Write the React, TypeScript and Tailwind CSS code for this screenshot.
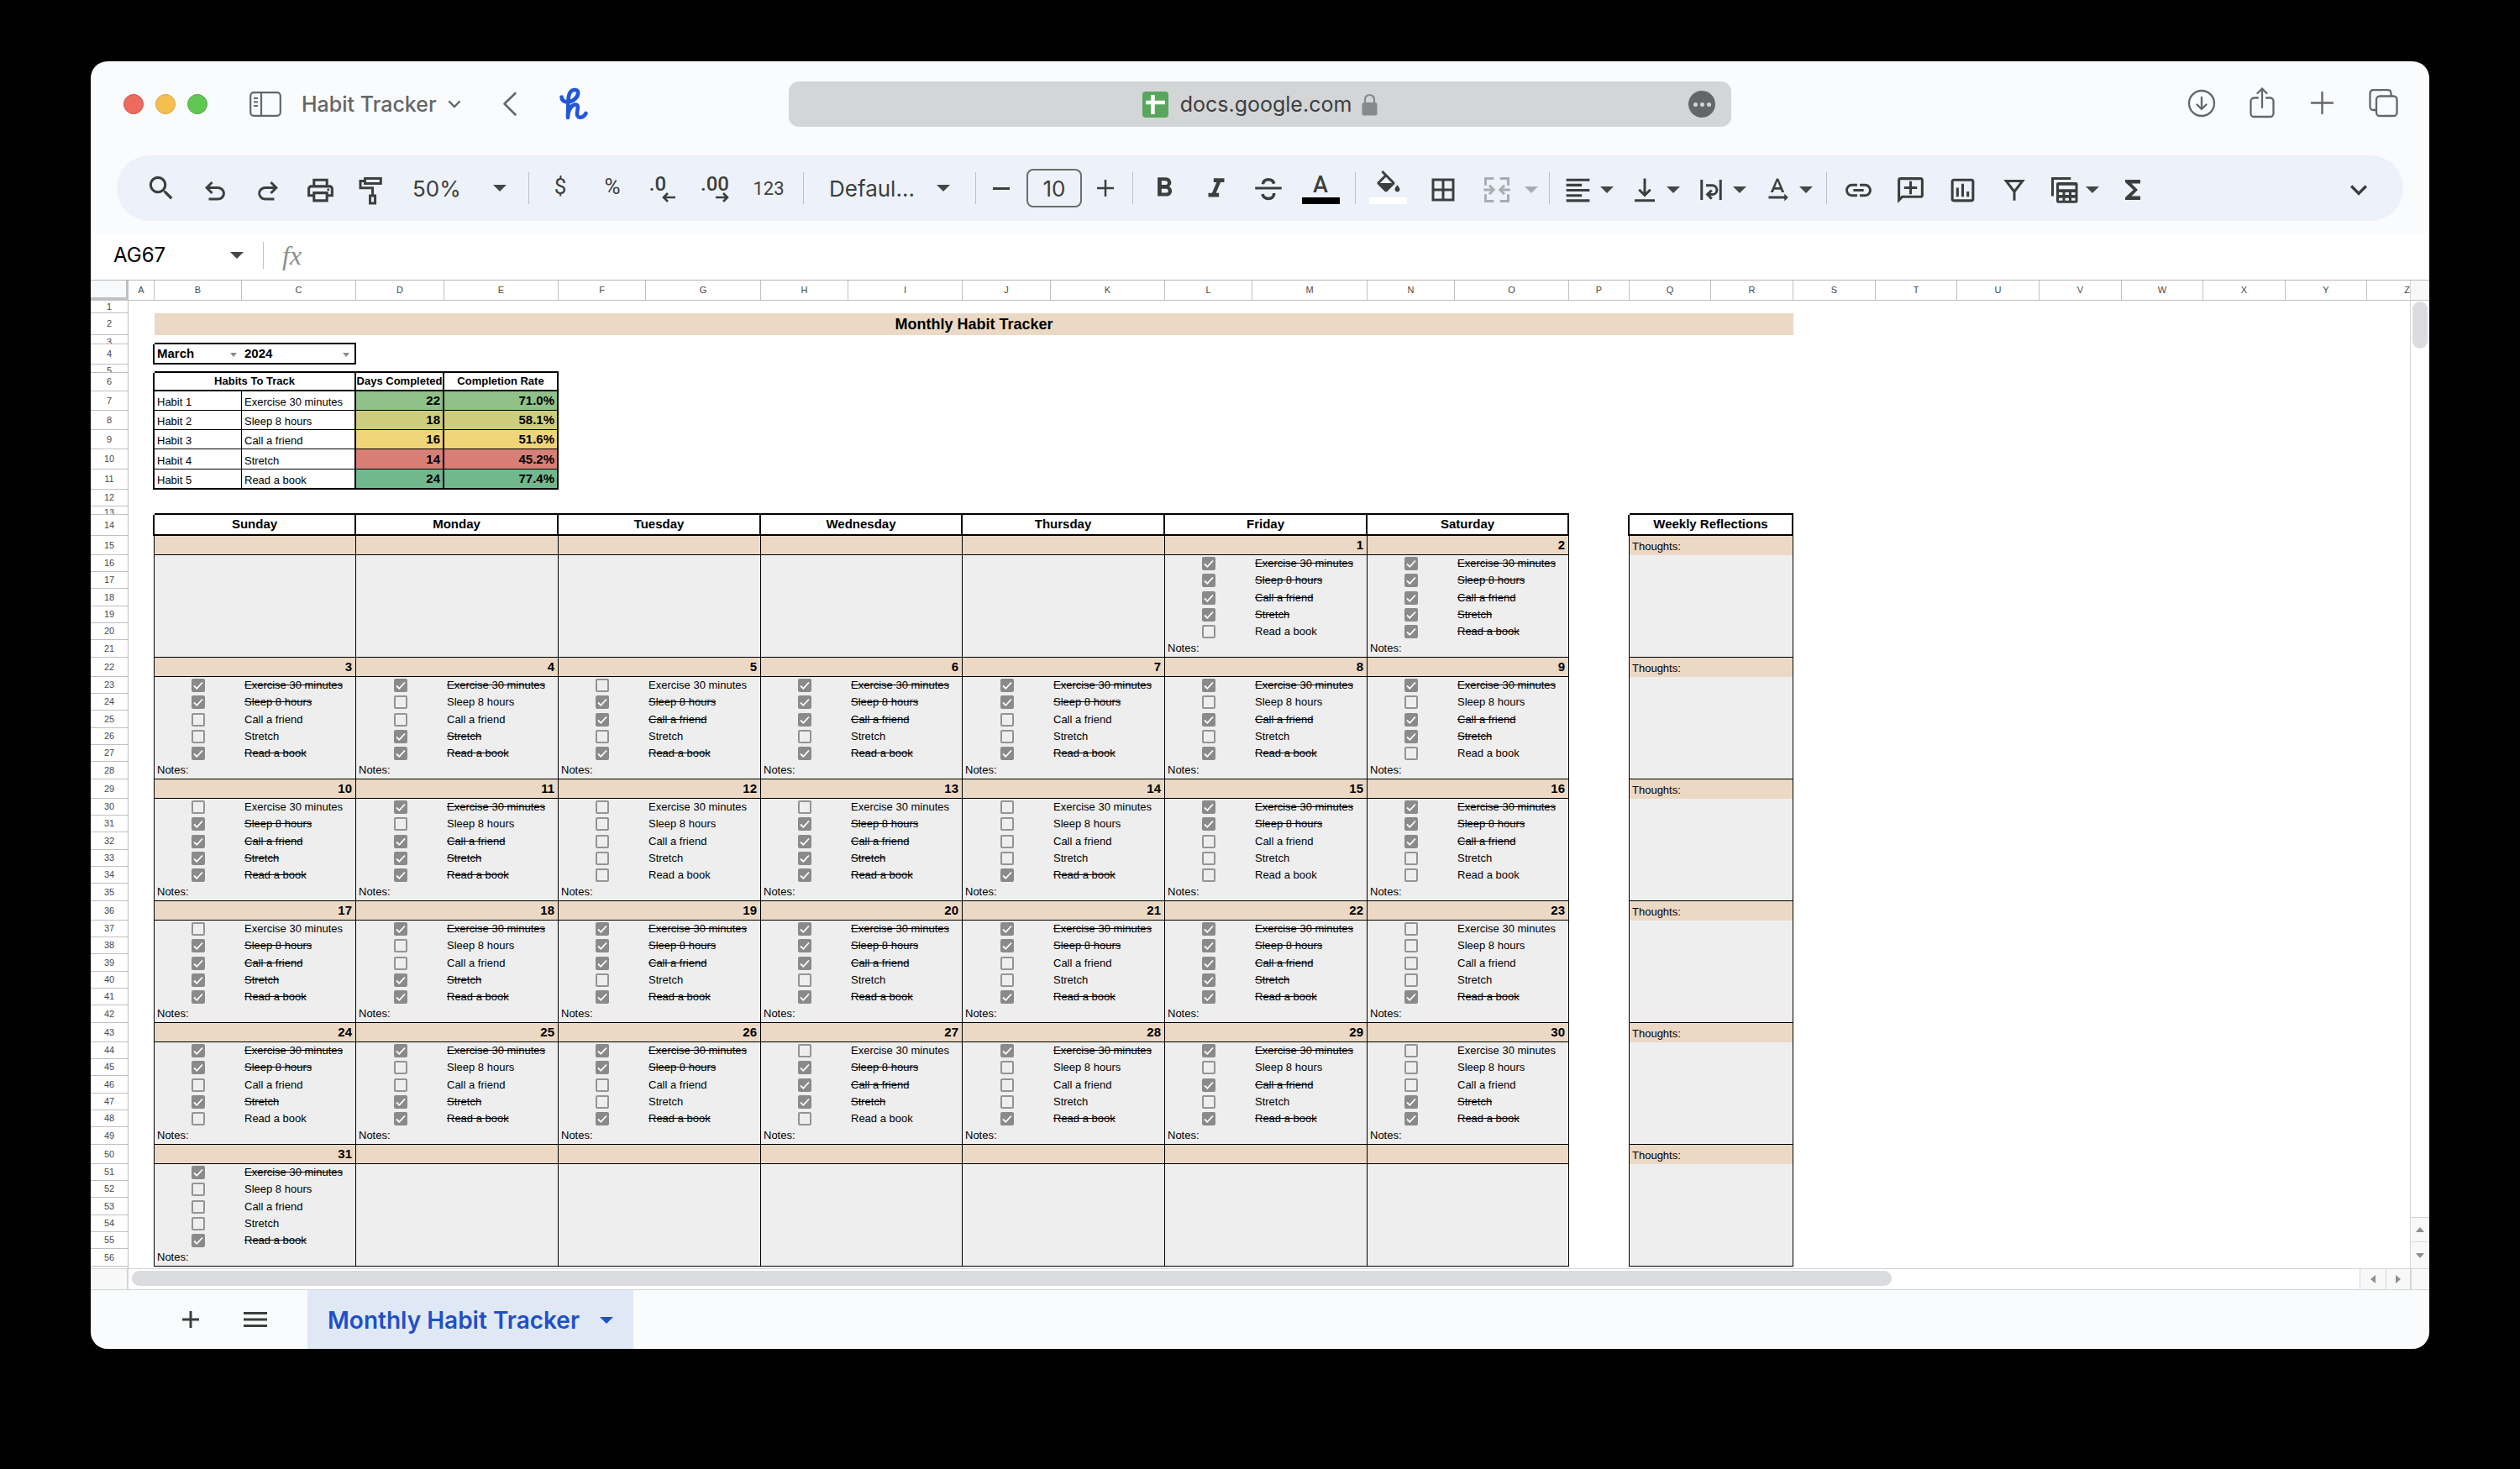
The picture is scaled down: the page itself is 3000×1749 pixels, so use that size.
import { useState, type ReactNode } from "react";
import {
  MdBorderAll,
  MdExpandMore,
  MdFormatAlignLeft,
  MdFormatBold,
  MdFormatItalic,
  MdFunctions,
  MdLink,
  MdOutlineAddComment,
  MdOutlineInsertChart,
  MdOutlinePrint,
  MdSearch,
  MdTextRotationNone,
} from "react-icons/md";

/* ---------- data ---------- */

const HABITS = ["Exercise 30 minutes", "Sleep 8 hours", "Call a friend", "Stretch", "Read a book"];

const SUMMARY = [
  { days: "22", rate: "71.0%", color: "bg-[#90c189]", height: "h-[23px]" },
  { days: "18", rate: "58.1%", color: "bg-[#cdce7d]", height: "h-[23px]" },
  { days: "16", rate: "51.6%", color: "bg-[#efd577]", height: "h-[23px]" },
  { days: "14", rate: "45.2%", color: "bg-[#d77f76]", height: "h-[24px]" },
  { days: "24", rate: "77.4%", color: "bg-[#71b88e]", height: "h-[24px]" },
];

const WEEKDAYS = ["Sunday", "Monday", "Tuesday", "Wednesday", "Thursday", "Friday", "Saturday"];

// One string per day of the month; each digit is one habit, in the order of HABITS.
const INITIAL_LOG = [
  "11110", "11111", "11001", "10011", "01101", "11101", "11001", "10101",
  "10110", "01111", "10111", "00000", "01111", "00001", "11000", "11100",
  "01111", "10011", "11101", "11101", "11001", "11111", "00001", "11010",
  "10011", "11001", "01110", "10001", "10101", "00011", "10001",
];

const FIRST_WEEKDAY = 5;
const WEEKS = [0, 1, 2, 3, 4, 5].map((w) =>
  WEEKDAYS.map((_, d) => {
    const day = w * 7 + d - FIRST_WEEKDAY + 1;
    return day >= 1 && day <= INITIAL_LOG.length ? day : null;
  }),
);

const LETTERS = "ABCDEFGHIJKLMNOPQRSTUVWXYZ".split("");
const COLUMNS = [
  "w-[45px]", "w-[31px]", "w-[104px]", "w-[136px]", "w-[105px]", "w-[136px]", "w-[104px]",
  "w-[137px]", "w-[104px]", "w-[136px]", "w-[105px]", "w-[136px]", "w-[104px]", "w-[137px]",
  "w-[104px]", "w-[136px]", "w-[72px]", "w-[97px]", "w-[98px]", "w-[98px]", "w-[97px]",
  "w-[98px]", "w-[98px]", "w-[97px]", "w-[98px]", "w-[97px]", "",
];

/* ---------- small drawings ---------- */

function Caret({ className = "text-[#444746]" }: { className?: string }) {
  return (
    <svg width="16" height="8" viewBox="0 0 16 8" className={`shrink-0 ${className}`} aria-hidden="true">
      <path d="M0 0h16L8 8z" fill="currentColor" />
    </svg>
  );
}

function Stroke({ children, size = 36 }: { children: ReactNode; size?: number }) {
  return (
    <svg
      width={size}
      height={size}
      viewBox="0 0 24 24"
      fill="none"
      stroke="currentColor"
      strokeWidth="2"
      className="shrink-0"
      aria-hidden="true"
    >
      {children}
    </svg>
  );
}

function Symbol({ d }: { d: string }) {
  return (
    <svg width="36" height="36" viewBox="0 -960 960 960" fill="currentColor" className="shrink-0" aria-hidden="true">
      <path d={d} />
    </svg>
  );
}

/* ---------- browser bar ---------- */

function BrowserBar() {
  return (
    <header className="grid h-[102px] grid-cols-[1fr_minmax(0,1122px)_1fr] items-center text-[#656669]">
      <div className="flex items-center pl-[39px]">
        <div className="flex gap-[14px]">
          <button aria-label="Close" className="size-6 rounded-full border border-[#d35148] bg-[#ed6a5f]" />
          <button aria-label="Minimize" className="size-6 rounded-full border border-[#d6a243] bg-[#f5bf4f]" />
          <button aria-label="Zoom" className="size-6 rounded-full border border-[#53a73e] bg-[#62c655]" />
        </div>
        <button aria-label="Sidebar" className="ml-[50px]">
          <svg width="38" height="30" viewBox="0 0 38 30" fill="none" stroke="currentColor" strokeWidth="2.2" aria-hidden="true">
            <rect x="1.2" y="1.2" width="35.6" height="27.6" rx="4" />
            <path d="M14 1v28M5 8h5M5 12.5h5M5 17h5" />
          </svg>
        </button>
        <button className="ml-6 flex items-center gap-[13px] text-[25px] leading-8 font-medium whitespace-nowrap">
          Habit Tracker
          <svg width="16" height="10" viewBox="0 0 16 10" fill="none" stroke="currentColor" strokeWidth="2.4" strokeLinecap="round" aria-hidden="true">
            <path d="m2 2 6 6 6-6" />
          </svg>
        </button>
        <button aria-label="Back" className="ml-[49px]">
          <svg width="18" height="30" viewBox="0 0 18 30" fill="none" stroke="currentColor" strokeWidth="2.6" strokeLinecap="round" strokeLinejoin="round" aria-hidden="true">
            <path d="M15.5 2 2.5 14.5 15.5 27.5" />
          </svg>
        </button>
        <button aria-label="Honey" className="ml-[49px]">
          <svg width="36" height="40" viewBox="0 0 36 40" fill="none" stroke="#2257d8" strokeWidth="4.6" strokeLinecap="round" strokeLinejoin="round" aria-hidden="true">
            <path d="M3.5 11.5C4 18 12 19 18 15c6-4 7-11.5 2-12-5.5-.5-8 4-8.500 12L11 36" />
            <path d="M11 33c1-7 5-12.5 9-12.5 4.5 0 2.5 6 2 9.5-.8 7 6 8 10.5 1" />
          </svg>
        </button>
      </div>

      <div className="relative flex h-[54px] items-center justify-center rounded-xl bg-[#d4d5d7] text-[#3d3e40]">
        <a href="#" className="flex items-center text-[25px] leading-8">
          <svg width="31" height="31" viewBox="0 0 31 31" className="mr-[14px]" aria-hidden="true">
            <rect width="31" height="31" rx="4" fill="#58a65c" />
            <path d="M12.5 4v23M4 13h23" stroke="#fff" strokeWidth="4.5" />
          </svg>
          docs.google.com
          <svg width="19" height="27" viewBox="0 0 19 27" className="ml-3" aria-hidden="true">
            <rect x="0.5" y="11" width="18" height="15.5" rx="2.5" fill="#88898b" />
            <path d="M4 12V7.5a5.5 5.5 0 0 1 11 0V12" fill="none" stroke="#88898b" strokeWidth="2.2" />
          </svg>
        </a>
        <button aria-label="Page menu" className="absolute right-[19px] flex size-8 items-center justify-center gap-[3px] rounded-full bg-[#656669]">
          <span className="size-[5px] rounded-full bg-[#d4d5d7]" />
          <span className="size-[5px] rounded-full bg-[#d4d5d7]" />
          <span className="size-[5px] rounded-full bg-[#d4d5d7]" />
        </button>
      </div>

      <div className="flex items-center justify-end gap-9 pr-[37px]">
        <button aria-label="Downloads">
          <svg width="36" height="36" viewBox="0 0 36 36" fill="none" stroke="currentColor" strokeWidth="2.3" strokeLinecap="round" strokeLinejoin="round" aria-hidden="true">
            <circle cx="18" cy="17" r="15" />
            <path d="M18 10v14M12.5 18.5 18 24l5.500-5.500" />
          </svg>
        </button>
        <button aria-label="Share">
          <svg width="36" height="40" viewBox="0 0 36 40" fill="none" stroke="currentColor" strokeWidth="2.3" strokeLinecap="round" strokeLinejoin="round" aria-hidden="true">
            <path d="M13 12.500H8.500A4 4 0 0 0 4.500 16.500v14.500a4 4 0 0 0 4 4h19a4 4 0 0 0 4-4V16.500a4 4 0 0 0-4-4H23M18 24V1.500M12.500 7 18 1.500 23.500 7" />
          </svg>
        </button>
        <button aria-label="New tab">
          <svg width="36" height="36" viewBox="0 0 36 36" fill="none" stroke="currentColor" strokeWidth="2.4" strokeLinecap="round" aria-hidden="true">
            <path d="M17.500 4v25M5 16.500h25" />
          </svg>
        </button>
        <button aria-label="Tab overview">
          <svg width="36" height="36" viewBox="0 0 36 36" fill="none" stroke="currentColor" strokeWidth="2.3" aria-hidden="true">
            <path d="M9 25H6.500a4 4 0 0 1-4-4V5a4 4 0 0 1 4-4h17a4 4 0 0 1 4 4v3" />
            <rect x="10" y="8.5" width="24.5" height="23.5" rx="4" />
          </svg>
        </button>
      </div>
    </header>
  );
}

/* ---------- toolbar ---------- */

function Tool({ label, className, children }: { label: string; className: string; children: ReactNode }) {
  return (
    <button aria-label={label} className={`flex h-[60px] shrink-0 items-center justify-center ${className}`}>
      {children}
    </button>
  );
}

function Divider() {
  return <span className="h-[38px] w-px shrink-0 bg-[#bdc1c6]" />;
}

function Toolbar() {
  return (
    <div role="toolbar" aria-label="Main" className="mx-[31px] mt-[10px] mb-[15px] flex h-[78px] items-center overflow-hidden rounded-full bg-[#edf2fa] pr-[25px] pl-[21px] text-[#3c3f3e]">
      <Tool label="Search the menus" className="w-16"><MdSearch size={38} /></Tool>
      <Tool label="Undo" className="w-16 pt-2">
        <Symbol d="M280-200v-80h284q63 0 109.500-40T720-420q0-60-46.500-100T564-560H312l104 104-56 56-200-200 200-200 56 56-104 104h252q97 0 163.500 63T800-420q0 94-66.500 157T564-200H280Z" />
      </Tool>
      <Tool label="Redo" className="w-[62px] pt-2">
        <Symbol d="M396-200q-97 0-163.500-63T166-420q0-94 66.500-157T396-640h252L544-744l56-56 200 200-200 200-56-56 104-104H396q-63 0-109.500 40T240-420q0 60 46.500 100T396-280h284v80H396Z" />
      </Tool>
      <Tool label="Print" className="w-[62px] pt-1"><MdOutlinePrint size={37} /></Tool>
      <Tool label="Paint format" className="w-[58px] pt-[6px]">
        <Stroke>
          <rect x="7.7" y="2.3" width="12.5" height="4" />
          <path d="M7.7 4.3H4v5.5h9.7V16" />
          <rect x="11.7" y="16" width="4" height="6" />
        </Stroke>
      </Tool>
      <Tool label="Zoom" className="w-[159px] !justify-between pr-[26px] pl-[21px]">
        <span className="text-[26px]">50%</span>
        <Caret />
      </Tool>
      <Divider />
      <Tool label="Format as currency" className="w-[74px] pb-1 font-[Roboto] text-[26px]">$</Tool>
      <Tool label="Format as percent" className="w-[50px] pb-1 font-[Roboto] text-[26px]">%</Tool>
      <Tool label="Decrease decimal places" className="ml-1 w-[58px] flex-col font-[Roboto] text-[24px] leading-6 font-medium">
        <span className="mr-2">.0</span>
        <svg width="16" height="12" viewBox="0 0 16 12" fill="none" stroke="currentColor" strokeWidth="2.6" className="-mt-[2px] ml-[18px]" aria-hidden="true">
          <path d="M16 6H2M7 1 2 6l5 5" />
        </svg>
      </Tool>
      <Tool label="Increase decimal places" className="w-[70px] flex-col font-[Roboto] text-[24px] leading-6 font-medium">
        <span>.00</span>
        <svg width="16" height="12" viewBox="0 0 16 12" fill="none" stroke="currentColor" strokeWidth="2.6" className="-mt-[2px] ml-[18px]" aria-hidden="true">
          <path d="M0 6h14M9 1l5 5-5 5" />
        </svg>
      </Tool>
      <Tool label="More formats" className="w-[58px] font-[Roboto] text-[22px]">123</Tool>
      <span className="w-3 shrink-0" />
      <Divider />
      <Tool label="Font" className="w-[204px] !justify-between px-[30px]">
        <span className="text-[26px]">Defaul...</span>
        <Caret />
      </Tool>
      <Divider />
      <Tool label="Decrease font size" className="w-[60px]">
        <span className="h-[3px] w-5 bg-current" />
      </Tool>
      <input
        aria-label="Font size"
        defaultValue="10"
        className="h-[46px] w-[66px] shrink-0 rounded-lg border-2 border-[#6b6e6d] bg-transparent text-center text-[26px]"
      />
      <Tool label="Increase font size" className="w-14">
        <Stroke size={30}><path d="M12 4v16M4 12h16" /></Stroke>
      </Tool>
      <span className="w-1 shrink-0" />
      <Divider />
      <Tool label="Bold" className="w-[74px]"><MdFormatBold size={38} /></Tool>
      <Tool label="Italic" className="w-[50px] pt-[2px]"><MdFormatItalic size={38} /></Tool>
      <Tool label="Strikethrough" className="w-[74px]">
        <Stroke>
          <path d="M1.5 12h21" />
          <path d="M7.6 8.8C8 6.2 9.8 5.2 12 5.2s3.9 1.1 4.4 3.3" strokeWidth="2.4" />
          <path d="M16.5 16c0 2.800-1.900 4.300-4.500 4.300S7.700 18.900 7.400 16.700" strokeWidth="2.4" />
        </Stroke>
      </Tool>
      <Tool label="Text color" className="w-[50px] flex-col justify-end! gap-[2px] pb-[11px]">
        <span className="font-[Roboto] text-[27px] leading-[26px] font-medium">A</span>
        <span className="h-2 w-[45px] bg-black" />
      </Tool>
      <span className="w-4 shrink-0" />
      <Divider />
      <Tool label="Fill color" className="w-[77px] flex-col justify-end! gap-px pb-[11px]">
        <svg width="36" height="36" viewBox="0 0 24 24" fill="currentColor" className="-mb-[5px]" aria-hidden="true">
          <path d="M16.560 8.940 7.620 0 6.210 1.410l2.380 2.380-5.150 5.150c-.59.590-.59 1.540 0 2.120l5.500 5.500c.290.290.680.440 1.060.440s.770-.150 1.060-.440l5.500-5.500c.590-.580.590-1.530 0-2.120zM5.210 10 10 5.210 14.790 10H5.210zM19 11.500s-2 2.170-2 3.500c0 1.100.9 2 2 2s2-.9 2-2c0-1.330-2-3.500-2-3.500z" />
        </svg>
        <span className="h-2 w-[45px] bg-white" />
      </Tool>
      <Tool label="Borders" className="w-[54px] pt-1"><MdBorderAll size={36} /></Tool>
      <Tool label="Merge cells" className="w-[99px] justify-end! gap-[15px] pt-1 pr-[13px] text-[#a9acb0]">
        <Stroke>
          <path d="M9.5 3H3v5.500M14.500 3H21v5.500M9.500 21H3v-5.500M14.500 21H21v-5.500M1.500 12H9M6 8.500 9.500 12 6 15.500M22.500 12H15M18 8.500 14.500 12l3.500 3.500" />
        </Stroke>
        <Caret className="text-[#a9acb0]" />
      </Tool>
      <Divider />
      <Tool label="Horizontal align" className="w-[76px] justify-end! gap-[8px] pt-1"><MdFormatAlignLeft size={37} /><Caret /></Tool>
      <Tool label="Vertical align" className="w-[79px] justify-end! gap-[8px] pt-1">
        <Stroke><path d="M12 3v13M7.5 11.8 12 16.3l4.500-4.500M4 20.500h16" /></Stroke>
        <Caret />
      </Tool>
      <Tool label="Text wrapping" className="w-[79px] justify-end! gap-[8px] pt-1">
        <Stroke><path d="M4.5 4v16M19.5 4v16M8 8.5h5a3.500 3.500 0 0 1 0 7.200H9.500M12.500 12.300l-3.400 3.400 3.400 3.400" /></Stroke>
        <Caret />
      </Tool>
      <Tool label="Text rotation" className="w-[79px] justify-end! gap-[8px] pt-1"><MdTextRotationNone size={36} /><Caret /></Tool>
      <span className="w-4 shrink-0" />
      <Divider />
      <Tool label="Insert link" className="ml-[6px] w-[62px] pt-1"><MdLink size={37} /></Tool>
      <Tool label="Insert comment" className="w-[62px] pt-1"><MdOutlineAddComment size={37} className="-scale-x-100" /></Tool>
      <Tool label="Insert chart" className="w-[62px] pt-1"><MdOutlineInsertChart size={37} /></Tool>
      <Tool label="Create a filter" className="w-[62px] pt-1">
        <Stroke><path d="M5.5 5h13L12 13.500zM12 12v8.500" /></Stroke>
      </Tool>
      <Tool label="Filter views" className="w-[78px] justify-end! gap-[8px] pt-1 pr-2">
        <svg width="36" height="36" viewBox="0 0 24 24" fill="none" aria-hidden="true">
          <path d="M3 17V3h14.5" stroke="currentColor" strokeWidth="2" />
          <rect x="6" y="6" width="17" height="16.5" rx="1.5" fill="currentColor" />
          <path d="M8 8.500h13v3H8zM8 14h3v2H8zM13 14h3v2h-3zM18 14h3v2h-3zM8 18.500h3v2H8zM13 18.500h3v2h-3zM18 18.500h3v2h-3z" fill="#edf2fa" />
        </svg>
        <Caret />
      </Tool>
      <Tool label="Functions" className="w-16 pt-1"><MdFunctions size={36} /></Tool>
      <Tool label="Hide the menus" className="ml-auto w-14 pt-1"><MdExpandMore size={40} /></Tool>
    </div>
  );
}

function FormulaBar() {
  return (
    <div className="flex h-[55px] items-center bg-white pb-1 pl-[27px]">
      <input aria-label="Name box" defaultValue="AG67" className="w-[139px] bg-transparent text-[24px] leading-8 text-black" />
      <button aria-label="Named ranges"><Caret /></button>
      <span className="mr-[22px] ml-[23px] h-8 w-px bg-[#bdc1c6]" />
      <label htmlFor="formula" className="w-10 font-['Liberation_Serif'] text-[32px] leading-8 text-[#8c8f8e] italic">fx</label>
      <input id="formula" className="min-w-0 flex-1 bg-transparent text-[24px] outline-none" />
    </div>
  );
}

/* ---------- sheet ---------- */

function RowHead({ n, clipped = false }: { n: number; clipped?: boolean }) {
  return (
    <th scope="row" className="border-r border-b border-[#c0c0c0] bg-white p-0 text-center text-[11px] leading-[11px] font-normal text-[#4a4a4a]">
      {clipped ? <div className="h-[9px] overflow-hidden pt-[2px]">{n}</div> : n}
    </th>
  );
}

function Select({ label, value, options }: { label: string; value: string; options: string[] }) {
  return (
    <div className="grid items-center">
      <select
        aria-label={label}
        defaultValue={value}
        className="col-start-1 row-start-1 h-5 w-full appearance-none bg-transparent pl-[3px] text-[15px] leading-5 font-bold"
      >
        {options.map((o) => (
          <option key={o}>{o}</option>
        ))}
      </select>
      <svg width="8" height="5" viewBox="0 0 8 5" className="pointer-events-none col-start-1 row-start-1 mt-[3px] mr-[6px] justify-self-end" aria-hidden="true">
        <path d="M0 0h8L4 5z" fill="#8a8a8a" />
      </svg>
    </div>
  );
}

function CheckBox({ id, checked, onChange }: { id: string; checked: boolean; onChange: () => void }) {
  return (
    <span className="mx-auto grid size-4">
      <input
        id={id}
        type="checkbox"
        checked={checked}
        onChange={onChange}
        className="col-start-1 row-start-1 size-4 appearance-none rounded-[2px] border-2 border-[#949494] checked:border-[#8a8a8a] checked:bg-[#8a8a8a]"
      />
      {checked && (
        <svg viewBox="0 0 16 16" className="pointer-events-none col-start-1 row-start-1 size-4" fill="none" stroke="#fff" strokeWidth="1.8" aria-hidden="true">
          <path d="m3 8.5 3.3 3.3L13 4.5" />
        </svg>
      )}
    </span>
  );
}

const ITEM_HEIGHTS = ["h-[20px]", "h-[20px]", "h-[21px]", "h-[20px]", "h-[20px]"];

function Sheet() {
  const [log, setLog] = useState(INITIAL_LOG);
  const toggle = (day: number, habit: number) =>
    setLog((prev) =>
      prev.map((s, i) =>
        i === day - 1 ? s.slice(0, habit) + (s[habit] === "1" ? "0" : "1") + s.slice(habit + 1) : s,
      ),
    );

  return (
    <table className="w-full table-fixed border-separate border-spacing-0 bg-white font-['Liberation_Sans',Arial,sans-serif] text-[13px] leading-4 text-black">
      <colgroup>
        {COLUMNS.map((w, i) => (
          <col key={i} className={w} />
        ))}
      </colgroup>
      <thead>
        <tr className="h-[24px]">
          <th className="border-r-[3px] border-b-4 border-[#c0c0c0] bg-[#f8f9fa] p-0" aria-label="Select all" />
          {LETTERS.map((l) => (
            <th
              key={l}
              scope="col"
              className={`border-b border-[#c0c0c0] p-0 text-[11px] leading-[11px] font-normal text-[#4a4a4a] ${l === "Z" ? "overflow-hidden text-right" : "border-r text-center"}`}
            >
              {l}
            </th>
          ))}
        </tr>
      </thead>
      <tbody>
        <tr className="h-[15px]"><RowHead n={1} /><td colSpan={26} className="p-0" /></tr>
        <tr className="h-[26px]">
          <RowHead n={2} />
          <td className="p-0" />
          <td colSpan={17} className="bg-[#ebd9c5] p-0 text-center text-[18px] leading-5 font-bold">Monthly Habit Tracker</td>
          <td colSpan={8} className="p-0" />
        </tr>
        <tr className="h-[11px]">
          <RowHead n={3} clipped />
          <td className="p-0" />
          <td colSpan={2} className="border-b-2 border-black p-0" />
          <td colSpan={23} className="p-0" />
        </tr>
        <tr className="h-[24px]">
          <RowHead n={4} />
          <td className="border-r-2 border-black p-0" />
          <td className="border-b-2 border-black p-0">
            <Select label="Month" value="March" options={["January", "February", "March", "April"]} />
          </td>
          <td className="border-r-2 border-b-2 border-black p-0">
            <Select label="Year" value="2024" options={["2023", "2024", "2025"]} />
          </td>
          <td colSpan={23} className="p-0" />
        </tr>
        <tr className="h-[10px]">
          <RowHead n={5} clipped />
          <td className="p-0" />
          <td colSpan={4} className="border-b-2 border-black p-0" />
          <td colSpan={21} className="p-0" />
        </tr>
        <tr className="h-[22px] text-center font-bold">
          <RowHead n={6} />
          <td className="border-r-2 border-black p-0" />
          <td colSpan={2} className="border-r-2 border-b-2 border-black p-0">Habits To Track</td>
          <td className="border-r-2 border-b-2 border-black p-0 whitespace-nowrap">Days Completed</td>
          <td className="border-r-2 border-b-2 border-black p-0">Completion Rate</td>
          <td colSpan={21} className="p-0" />
        </tr>
        {SUMMARY.map((row, i) => {
          const bottom = i === SUMMARY.length - 1 ? "border-b-2" : "border-b";
          return (
            <tr key={HABITS[i]} className={row.height}>
              <RowHead n={7 + i} />
              <td className="border-r-2 border-black p-0" />
              <td className={`border-r border-black p-0 pb-px pl-[3px] align-bottom ${bottom}`}>Habit {i + 1}</td>
              <td className={`border-r-2 border-black p-0 pb-px pl-[3px] align-bottom ${bottom}`}>{HABITS[i]}</td>
              <td className={`border-r-2 border-black p-0 pr-[3px] text-right text-[15px] font-bold ${bottom} ${row.color}`}>{row.days}</td>
              <td className={`border-r-2 border-black p-0 pr-[3px] text-right text-[15px] font-bold ${bottom} ${row.color}`}>{row.rate}</td>
              <td colSpan={21} className="p-0" />
            </tr>
          );
        })}
        <tr className="h-[20px]"><RowHead n={12} /><td colSpan={26} className="p-0" /></tr>
        <tr className="h-[10px]">
          <RowHead n={13} clipped />
          <td className="p-0" />
          <td colSpan={14} className="border-b-2 border-black p-0" />
          <td className="p-0" />
          <td colSpan={2} className="border-b-2 border-black p-0" />
          <td colSpan={8} className="p-0" />
        </tr>
        <tr className="h-[25px] text-center text-[15px] font-bold">
          <RowHead n={14} />
          <td className="border-r-2 border-black p-0" />
          {WEEKDAYS.map((d) => (
            <td key={d} colSpan={2} className="border-r-2 border-b-2 border-black p-0 pb-[2px]">{d}</td>
          ))}
          <td className="border-r-2 border-black p-0" />
          <td colSpan={2} className="border-r-2 border-b-2 border-black p-0 pb-[2px]">Weekly Reflections</td>
          <td colSpan={8} className="p-0" />
        </tr>
        {WEEKS.flatMap((week, w) => {
          const start = 15 + w * 7;
          return [
            <tr key={`${w}-date`} className="h-[23px]">
              <RowHead n={start} />
              <td className="border-r border-black p-0" />
              {week.map((day, d) => (
                <td key={d} colSpan={2} className="border-r border-b border-black bg-[#ebd9c5] p-0 pr-1 text-right text-[15px] font-bold">{day}</td>
              ))}
              <td className="border-r border-black p-0" />
              <td colSpan={2} className="border-r border-black bg-[#ebd9c5] p-0 pt-[2px] pl-[3px]">Thoughts:</td>
              <td colSpan={8} className="p-0" />
            </tr>,
            ...HABITS.map((habit, h) => (
              <tr key={`${w}-${h}`} className={ITEM_HEIGHTS[h]}>
                <RowHead n={start + 1 + h} />
                <td className="border-r border-black p-0" />
                {week.flatMap((day, d) => {
                  if (day === null) {
                    return [<td key={d} colSpan={2} className="border-r border-black bg-[#eeeeee] p-0" />];
                  }
                  const done = log[day - 1][h] === "1";
                  const id = `day-${day}-habit-${h}`;
                  return [
                    <td key={`${d}-box`} className="bg-[#eeeeee] p-0">
                      <CheckBox id={id} checked={done} onChange={() => toggle(day, h)} />
                    </td>,
                    <td key={`${d}-label`} className="border-r border-black bg-[#eeeeee] p-0 pl-[3px]">
                      <label htmlFor={id} className={`block ${done ? "line-through" : ""}`}>{habit}</label>
                    </td>,
                  ];
                })}
                <td className="border-r border-black p-0" />
                <td colSpan={2} className="border-r border-black bg-[#eeeeee] p-0" />
                <td colSpan={8} className="p-0" />
              </tr>
            )),
            <tr key={`${w}-notes`} className="h-[21px]">
              <RowHead n={start + 6} />
              <td className="border-r border-black p-0" />
              {week.map((day, d) => (
                <td key={d} colSpan={2} className="border-r border-b border-black bg-[#eeeeee] p-0 pl-[3px]">{day ? "Notes:" : ""}</td>
              ))}
              <td className="border-r border-black p-0" />
              <td colSpan={2} className="border-r border-b border-black bg-[#eeeeee] p-0" />
              <td colSpan={8} className="p-0" />
            </tr>,
          ];
        })}
        <tr className="h-[2px]">
          <th className="border-r border-[#c0c0c0] p-0" />
          <td colSpan={26} className="p-0" />
        </tr>
      </tbody>
    </table>
  );
}

function Arrow({ d }: { d: string }) {
  return (
    <svg width="10" height="10" viewBox="0 0 10 10" aria-hidden="true">
      <path d={d} fill="#8f8f8f" />
    </svg>
  );
}

function VerticalScroll() {
  return (
    <div className="flex w-[23px] shrink-0 flex-col border-l border-[#d5d6d8] bg-white">
      <span className="h-[24px] border-b border-[#c0c0c0] bg-[#f8f8f8]" />
      <span className="mx-[2px] mt-px h-[56px] rounded-full bg-[#dadce0]" />
      <button aria-label="Scroll up" className="mt-auto flex h-[29px] items-center justify-center border-t border-[#d0d1d3] bg-[#f8f8f8]">
        <Arrow d="M0 8h10L5 2z" />
      </button>
      <button aria-label="Scroll down" className="flex h-[32px] items-center justify-center border-t border-[#d5d9e0] bg-[#f8f8f8]">
        <Arrow d="M0 2h10L5 8z" />
      </button>
    </div>
  );
}

function HorizontalScroll() {
  return (
    <div className="flex h-[26px] border-y border-[#d3d5d7] bg-white">
      <span className="w-[45px] shrink-0 border-r-2 border-[#d3d5d7] bg-[#f8f8f8]" />
      <div className="min-w-0 flex-1 py-[2px] pl-1">
        <span className="block h-[18px] w-[79%] rounded-full bg-[#dadce0]" />
      </div>
      <button aria-label="Scroll left" className="flex w-[31px] items-center justify-center border-l border-[#d3d5d7] bg-[#f8f8f8]">
        <Arrow d="M8 0v10L2 5z" />
      </button>
      <button aria-label="Scroll right" className="flex w-[29px] items-center justify-center border-l border-[#d3d5d7] bg-[#f8f8f8]">
        <Arrow d="M2 0v10l6-5z" />
      </button>
      <span className="w-[23px] border-l-2 border-[#d3d5d7] bg-[#f8f8f8]" />
    </div>
  );
}

function SheetTabs() {
  return (
    <footer className="flex h-[70px] items-center text-[#3c3f3e]">
      <button aria-label="Add sheet" className="ml-[103px] flex size-8 items-center justify-center">
        <svg width="20" height="20" viewBox="0 0 20 20" stroke="currentColor" strokeWidth="3" aria-hidden="true">
          <path d="M10 0v20M0 10h20" />
        </svg>
      </button>
      <button aria-label="All sheets" className="ml-[45px] flex h-8 w-[32px] items-center justify-center">
        <svg width="28" height="18" viewBox="0 0 28 18" stroke="currentColor" strokeWidth="3" aria-hidden="true">
          <path d="M0 1.5h28M0 9h28M0 16.5h28" />
        </svg>
      </button>
      <button className="ml-[46px] flex h-full items-center gap-6 bg-[#e1e8f5] px-6 pt-[2px] text-[28px] font-semibold whitespace-nowrap text-[#1f50c8]">
        Monthly Habit Tracker
        <Caret className="text-[#1f50c8]" />
      </button>
    </footer>
  );
}

export default function App() {
  return (
    <div className="min-h-screen bg-black px-[108px] pt-[73px] pb-[73px] font-[Inter,sans-serif]">
      <main className="overflow-hidden rounded-[20px] bg-[#fafbfd]">
        <BrowserBar />
        <Toolbar />
        <FormulaBar />
        <div className="flex border-t border-[#b7b7b7]">
          <div className="min-w-0 flex-1 overflow-hidden">
            <Sheet />
          </div>
          <VerticalScroll />
        </div>
        <HorizontalScroll />
        <SheetTabs />
      </main>
    </div>
  );
}
